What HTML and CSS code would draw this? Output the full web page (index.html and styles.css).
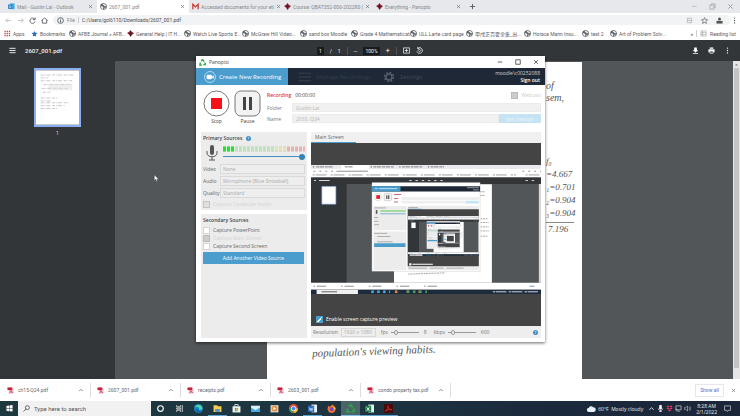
FILE: index.html
```html
<!DOCTYPE html>
<html lang="en">
<head>
<meta charset="utf-8">
<title>2607_001.pdf</title>
<link rel="stylesheet" href="styles.css">
</head>
<body>
<svg class="sprite" width="0" height="0" aria-hidden="true">
  <defs>
    <symbol id="globe" viewBox="0 0 16 16"><circle cx="8" cy="8" r="7.500" fill="#5a5e63"/><path d="M2 7l4 1 2 3-2 3-3-2zM7 2l5 1 2 4-3 1-2-3-3 0zM10 11l3-1-1 3-2 1z" fill="#f4f5f7"/></symbol>
    <symbol id="cross" viewBox="0 0 16 16"><path d="M8 0l3 4 5 3-4 4-4 5-3-5-5-4 5-3z" fill="#8f2639"/><path d="M8 3v10M4 8h8" stroke="#4d1522" stroke-width="2"/></symbol>
    <symbol id="close" viewBox="0 0 16 16"><path d="M3 3l10 10M13 3L3 13" stroke="currentColor" stroke-width="2" fill="none"/></symbol>
    <symbol id="star" viewBox="0 0 16 16"><path d="M8 1.500l2 4.500 5 .5-4 3.300 1.300 5L8 12.200 3.700 14.800 5 9.800 1 6.500l5-.5z" stroke="currentColor" stroke-width="1.500" fill="none"/></symbol>
    <symbol id="dots" viewBox="0 0 16 16"><circle cx="8" cy="2.500" r="1.600"/><circle cx="8" cy="8" r="1.600"/><circle cx="8" cy="13.500" r="1.600"/></symbol>
    <symbol id="pdf" viewBox="0 0 16 16"><path d="M4 2h11v13H4z" fill="#f0c9cf"/><path d="M1 1h11v6H1z" fill="#c8203c"/><path d="M7 7c0 3 4 6 7 6M12 8c-2 2-4 4-7 6" stroke="#c8203c" stroke-width="1.500" fill="none"/></symbol>
    <symbol id="caret" viewBox="0 0 16 16"><path d="M3 11l5-5 5 5" stroke="currentColor" stroke-width="2" fill="none"/></symbol>
    <symbol id="recycle" viewBox="0 0 16 16"><path d="M5 5l3-4 4 5M13 8l2 4-5 2M7 14H2l1-6" stroke="#28a745" stroke-width="3.200" fill="none"/></symbol>
    <symbol id="help" viewBox="0 0 16 16"><circle cx="8" cy="8" r="8" fill="#3f8fc0"/><path d="M6 6c0-3 4.500-2.500 4 0-.3 1.300-2 1.500-2 3.200M8 11v2" stroke="#fff" stroke-width="1.600" fill="none"/></symbol>

    <g id="base">
      <path fill="#e8eaed" d="M0 0h740v14H0z"/><path fill="#fff" d="M97 0h90v14H97zM0 13h740v27H0z"/>
      <path stroke="#777" stroke-width="3" stroke-dasharray="9 2 14 3" d="M17 6h52M109 6h27M201 6h67M293 6h67M385 6h43"/>
      <path stroke="#777" stroke-width="4" stroke-dasharray="4 4" d="M6 6h5M192 6h5M284 6h5M376 6h5"/>
      <path stroke="#888" stroke-width="3" stroke-dasharray="6 13" d="M8 20h68M680 20h60"/><path stroke="#888" stroke-width="3" d="M82 20h101"/>
      <path stroke="#999" stroke-width="3" stroke-dasharray="7 3 35 13" d="M5 32h655M690 32h45"/>
      <path fill="#323639" d="M0 40h740v21H0zM0 61h115v318H0z"/><path fill="#525659" d="M115 61h618v318H115z"/><path fill="#d5d5d5" d="M733 61h7v318h-7z"/>
      <path stroke="#eee" stroke-width="3" d="M26 50h34M10 50h6"/><path stroke="#ddd" stroke-width="3" stroke-dasharray="8 12" d="M316 50h110M690 50h40"/>
      <path fill="#fff" stroke="#8aaef0" stroke-width="2" d="M35 69h45v57H35z"/>
      <path fill="#fff" d="M267 62h315v317H267z"/><path fill="none" stroke="#777" stroke-width="2" stroke-dasharray="5 2 8 2" d="M544 86h14M544 98h14M546 173h24M546 185h26M546 199h26M546 212h27M546 229h22M312 351l120 -4"/>
      <path fill="#fff" d="M0 379h740v22H0z"/><path stroke="#888" stroke-width="3" stroke-dasharray="5 6 30 48" d="M8 390h440"/><path stroke="#6888d8" stroke-width="3" d="M703 390h16"/>
      <path fill="#1c2c3d" d="M0 401h740v15H0z"/><path fill="#f0f0f0" d="M18 401h133v15H18z"/><path stroke="#555" stroke-width="3" d="M34 408h50"/>
      <path stroke="#49aee0" stroke-width="8" stroke-dasharray="8 11" d="M194 408h60"/><path stroke="#e88b43" stroke-width="8" stroke-dasharray="8 30" d="M270 408h80"/><path stroke="#48a35d" stroke-width="8" stroke-dasharray="8 12" d="M308 408h65"/>
      <path stroke="#dde" stroke-width="3" stroke-dasharray="8 2 34 7" d="M585 408h145"/>
      <path fill="#fff" stroke="#aaa" d="M196 56h348v286H196z"/><path fill="#1d2735" d="M196 68h348v17H196z"/><path fill="#4a9ccb" d="M196 68h92v17h-92z"/>
      <path stroke="#c6e2f2" stroke-width="3" d="M206 76h9M219 76h58"/><path stroke="#ddd" stroke-width="2" d="M502 73h38M521 80h19"/>
      <circle cx="216" cy="103" r="12" fill="#fff" stroke="#999"/><path fill="#e21b2c" d="M210 97h12v12h-12z"/><rect x="235" y="91" width="24" height="24" rx="5" fill="#f1f1f1" stroke="#888"/><path fill="#555" d="M242 97h4v12h-4zM248 97h4v12h-4z"/>
      <path stroke="#c65c6b" stroke-width="3" d="M267 95h23M267 108h14M267 119h13"/><path fill="#efefef" d="M291 103h249v10H291zM291 115h207v9H291z"/><path fill="#c8e4f2" d="M498 115h42v9h-42z"/>
      <path fill="#ececec" d="M201 132h106v78H201zM201 214h106v124H201zM311 131h229v11H311zM311 326h229v12H311z"/>
      <path fill="#9ddb9b" d="M223 145h82v6h-82z"/><path stroke="#3f8fc0" stroke-width="2" d="M223 157h82"/><path stroke="#555" stroke-width="5" d="M211 145v12"/>
      <path stroke="#888" stroke-width="2" d="M203 138h38M203 169h13M203 181h14M203 192h16M203 220h42M213 230h43M213 247h50M313 137h31M313 332h60M382 332h45M435 332h56"/>
      <path fill="#4a9ccb" d="M203 252h101v12H203zM311 141h45v2h-45z"/><path fill="#444" d="M311 142h229v184H311z"/><path fill="#fff" d="M316 316h7v7h-7zM326 318h66v3h-66z"/>
    </g>
    <g id="level3"><use href="#base"/><use href="#base" transform="translate(312 164) scale(.308)"/></g>
    <g id="level2"><use href="#base"/><use href="#level3" transform="translate(312 164) scale(.308)"/></g>
  </defs>
</svg>

<header class="browser">
  <nav class="tabs" aria-label="Tabs">
    <div class="tab"><svg class="ico" viewBox="0 0 16 16"><path d="M4 1h11v13H4z" fill="#35a8e8"/><path d="M0 4h9v9H0z" fill="#1267b4"/><circle cx="4.500" cy="8.500" r="2.500" fill="none" stroke="#fff" stroke-width="1.500"/></svg><span>Mail - Guolin Lai - Outlook</span><svg class="x"><use href="#close"/></svg></div>
    <div class="tab active"><svg class="ico"><use href="#globe"/></svg><span>2607_001.pdf</span><svg class="x"><use href="#close"/></svg></div>
    <div class="tab"><svg class="ico" viewBox="0 0 16 16"><path d="M2 14V3l6 6 6-6v11" stroke="#c63b35" stroke-width="3" fill="none"/></svg><span>Accessed documents for your eti</span><svg class="x"><use href="#close"/></svg></div>
    <div class="tab"><svg class="ico"><use href="#cross"/></svg><span>Course: QBAT352-006-202280 (</span><svg class="x"><use href="#close"/></svg></div>
    <div class="tab"><svg class="ico"><use href="#cross"/></svg><span>Everything - Panopto</span><svg class="x"><use href="#close"/></svg></div>
    <button class="plain newtab" aria-label="New tab"><svg class="ico" viewBox="0 0 16 16"><path d="M8 2v12M2 8h12" stroke="#555" stroke-width="2"/></svg></button>
    <div class="wincontrols"><svg viewBox="0 0 16 16"><path d="M3 8h10" stroke="#bbb" stroke-width="2"/></svg><svg viewBox="0 0 16 16"><path d="M2 5h9v9H2zM5 5V2h9v9h-3" stroke="#999" stroke-width="1.500" fill="none"/></svg><svg><use href="#close"/></svg></div>
  </nav>
  <div class="address">
    <div class="navicons">
      <svg viewBox="0 0 16 16"><path d="M14 8H2M7 3L2 8l5 5" class="faint"/></svg>
      <svg viewBox="0 0 16 16"><path d="M2 8h12M9 3l5 5-5 5" class="faint"/></svg>
      <svg viewBox="0 0 16 16"><path d="M13 5a6 6 0 1 0 1 5M14 1v5H9" class="line"/></svg>
      <svg viewBox="0 0 16 16"><path d="M1 8l7-6 7 6M3 7v7h10V7" class="line"/></svg>
    </div>
    <label class="omnibox"><svg class="ico" viewBox="0 0 16 16"><circle cx="8" cy="8" r="6.500" class="line"/><path d="M8 4v2M8 7v5" class="line"/></svg><span>File</span><input aria-label="Address" value="C:/Users/gol6110/Downloads/2607_001.pdf"></label>
    <div class="acticons">
      <svg viewBox="0 0 16 16"><path d="M3 3h10v10H3zM3 8h10" class="faint"/></svg>
      <svg><use href="#star"/></svg>
      <svg viewBox="0 0 16 16"><circle cx="8" cy="4.500" r="3.500"/><path d="M1 15V9h14v6z"/></svg>
      <svg><use href="#dots"/></svg>
    </div>
  </div>
  <nav class="bookmarks" aria-label="Bookmarks">
    <a href="#"><svg class="ico" viewBox="0 0 16 16"><path d="M1 3h14M1 8h14M1 13h14" stroke="#c44" stroke-width="3" stroke-dasharray="3 2"/></svg><span>Apps</span></a>
    <a href="#"><svg class="ico" viewBox="0 0 16 16"><path d="M8 2l2 4 5 1-4 3 1 5-4-2-4 2 1-5-4-3 5-1z" fill="#2a6ac8"/></svg><span>Bookmarks</span></a>
    <a href="#"><svg class="ico"><use href="#globe"/></svg><span>AFBE Journal « AFB...</span></a>
    <a href="#"><svg class="ico"><use href="#cross"/></svg><span>General Help | IT H...</span></a>
    <a href="#"><svg class="ico"><use href="#globe"/></svg><span>Watch Live Sports E...</span></a>
    <a href="#"><svg class="ico"><use href="#globe"/></svg><span>McGraw Hill Video...</span></a>
    <a href="#"><svg class="ico"><use href="#globe"/></svg><span>sand box Moodle</span></a>
    <a href="#"><svg class="ico"><use href="#globe"/></svg><span>Grade 4 Mathematicat...</span></a>
    <a href="#"><svg class="ico"><use href="#globe"/></svg><span>ULL Larte card page</span></a>
    <a href="#"><svg class="ico"><use href="#globe"/></svg><span>甲戌正百霍全集_出...</span></a>
    <a href="#"><svg class="ico"><use href="#globe"/></svg><span>Horace Mann Insu...</span></a>
    <a href="#"><svg class="ico"><use href="#globe"/></svg><span>test 2</span></a>
    <a href="#"><svg class="ico"><use href="#globe"/></svg><span>Art of Problem Solv...</span></a>
    <div class="reading"><b>»</b><i></i><svg class="ico" viewBox="0 0 16 16"><path d="M2 2h12v12H2zM2 6h12M2 10h12M6 2v12" stroke="#888" fill="none"/></svg><span>Reading list</span></div>
  </nav>
</header>

<main class="viewer">
  <div class="pdfbar">
    <svg class="ico" viewBox="0 0 16 16"><path d="M1 3h14M1 8h14M1 13h14" stroke="#fff" stroke-width="2"/></svg>
    <strong>2607_001.pdf</strong>
    <div class="pager"><span class="chip">1</span><span>/</span><span>1</span><i></i><span>—</span><span class="chip">100%</span><span class="plus">+</span><i></i>
      <svg class="ico" viewBox="0 0 16 16"><path d="M1 2h14v12H1zM8 4v8M4 8h8" stroke="#fff" stroke-width="1.600" fill="none"/></svg>
      <svg class="ico" viewBox="0 0 16 16"><path d="M4 3a6.500 6.500 0 1 1-2 7M4 0v4h4M8 5l3 3-3 3-3-3z" stroke="#fff" stroke-width="1.600" fill="none"/></svg></div>
    <div class="pdfacts">
      <svg class="ico" viewBox="0 0 16 16"><path d="M5 1h6v6h3l-6 6-6-6h3zM2 14h12v2H2z" fill="#fff"/></svg>
      <svg class="ico" viewBox="0 0 16 16"><path d="M4 1h8v3H4zM1 5h14v7h-3v3H4v-3H1z" fill="#fff"/><path d="M5 10h6v3H5z" fill="#323639"/></svg>
      <svg class="ico light"><use href="#dots"/></svg></div>
  </div>
  <aside class="thumbs">
    <svg viewBox="0 0 45 57" class="thumb"><path fill="#fff" d="M0 0h45v57H0z"/><path d="M5 5h34M5 8h8M5 11h33M8 15h30M6 19h28M7 23h8M5 29h17M5 32h12M5 34h30M5 37h25M5 40h17" stroke="#aaa" stroke-dasharray="3 1 1 1 4 2" stroke-width=".7" fill="none"/><path d="M13 14h25v7H13z" fill="#ddd" opacity=".5"/></svg>
    <span>1</span>
  </aside>
  <section class="canvas">
    <article class="page">
      <div class="ink top">of<br>sem,</div>
      <div class="ink sums"><span>f₀</span><span>=4.667</span><span>₁=0.701</span><span>₂=0.904</span><span>₃=0.904</span><span class="total">7.196</span></div>
      <div class="ink foot">population's viewing habits.</div>
    </article>
  </section>
  <div class="scroll"><svg viewBox="0 0 16 16"><path d="M4 10l4-4 4 4z" fill="#888"/></svg><i></i></div>
</main>

<footer class="downloads">
  <div class="file"><svg class="ico"><use href="#pdf"/></svg><span>ch15-Q24.pdf</span><svg class="caret"><use href="#caret"/></svg></div>
  <div class="file"><svg class="ico"><use href="#pdf"/></svg><span>2607_001.pdf</span><svg class="caret"><use href="#caret"/></svg></div>
  <div class="file"><svg class="ico"><use href="#pdf"/></svg><span>receipts.pdf</span><svg class="caret"><use href="#caret"/></svg></div>
  <div class="file"><svg class="ico"><use href="#pdf"/></svg><span>2603_001.pdf</span><svg class="caret"><use href="#caret"/></svg></div>
  <div class="file"><svg class="ico"><use href="#pdf"/></svg><span>condo property tax.pdf</span><svg class="caret"><use href="#caret"/></svg></div>
  <button class="showall">Show all</button><svg class="x"><use href="#close"/></svg>
</footer>

<footer class="taskbar">
  <button class="plain start" aria-label="Start"><svg viewBox="0 0 16 16"><path d="M1 2l6-1v6H1zM8 1l7-1v7H8zM1 8h6v6l-6-1zM8 8h7v7l-7-1z" fill="#fff"/></svg></button>
  <label class="search"><svg viewBox="0 0 16 16"><circle cx="10" cy="6" r="4.500" class="line"/><path d="M7 9l-6 6" class="line"/></svg><input aria-label="Search" placeholder="Type here to search"></label>
  <div class="apps">
    <span><svg viewBox="0 0 16 16"><circle cx="8" cy="8" r="5" fill="none" stroke="#fff" stroke-width="2"/></svg></span>
    <span><svg viewBox="0 0 16 16"><path d="M3 2v3h7V2M3 14v-3h7v3M3 7h7v2H3zM13 2v12" stroke="#ddd" stroke-width="1.500" fill="none"/></svg></span>
    <span><svg viewBox="0 0 16 16"><circle cx="8" cy="8" r="8" fill="#1683c7"/><path d="M1 6c2-6 11-7 14 1 0 3-4 4-6 3 1-5-5-6-8-4z" fill="#54d4a0"/><path d="M6 8c-1 4 3 6 7 5-4 4-10 1-9-3z" fill="#0b4f91"/></svg></span>
    <span class="open"><svg viewBox="0 0 16 16"><path d="M1 2h6l2 2h6v10H1z" fill="#f7cd4d"/><path d="M4 9h8v5H4z" fill="#4a91c8"/></svg></span>
    <span><svg viewBox="0 0 16 16"><path d="M1 4h14v11H1z" fill="#eef6f8"/><path d="M5 4V1h6v3" stroke="#eee" fill="none" stroke-width="1.500"/><path d="M5 7h3v3H5z" fill="#e6593a"/><path d="M8 7h3v3H8z" fill="#7dbb42"/><path d="M5 10h3v3H5z" fill="#35a2dc"/><path d="M8 10h3v3H8z" fill="#f2b632"/></svg></span>
    <span><svg viewBox="0 0 16 16"><path d="M0 3h16v11H0z" fill="#dceffa"/><path d="M0 6l8 5 8-5v8H0z" fill="#45a9e2"/></svg></span>
    <span><svg viewBox="0 0 16 16"><path d="M1 2h14v13H1z" fill="#d8d0c3"/><circle cx="8" cy="8" r="5" fill="#e48935"/><path d="M6 5l5 3-5 3z" fill="#fff"/></svg></span>
    <span><svg viewBox="0 0 16 16"><circle cx="8" cy="8" r="8" fill="#e2453a"/><path d="M1 4l7 12A8 8 0 0 1 1 4z" fill="#35a853"/><path d="M8 16l4-8h4a8 8 0 0 1-8 8z" fill="#fbc02d"/><circle cx="8" cy="8" r="4" fill="#4285f4" stroke="#fff" stroke-width="1.500"/></svg></span>
    <span class="open"><svg viewBox="0 0 16 16"><path d="M6 1h10v14H6z" fill="#e6eef9"/><path d="M0 3h11v11H0z" fill="#2b66b8"/><path d="M2 6l2 6 1.500-5L7 12l2-6M12 6h3M12 10h3" stroke="#fff" fill="none"/></svg></span>
    <span><svg viewBox="0 0 16 16"><path d="M2 3l3 2 5-4 5 6c2 11-13 12-14 2z" fill="#f4722d"/><path d="M5 7c3-3 8 1 6 5-3 2-7-1-6-5z" fill="#7545c6"/><path d="M11 2l4 5-1 5z" fill="#ffcb38"/></svg></span>
    <span class="current"><svg><use href="#recycle"/></svg></span>
    <span class="open"><svg viewBox="0 0 16 16"><path d="M6 1h10v14H6z" fill="#e1f2e8"/><path d="M0 3h11v11H0z" fill="#1c7d48"/><path d="M3 6l5 6M8 6l-5 6M12 6h3M12 10h3" stroke="#fff" stroke-width="1.500"/></svg></span>
    <span class="open"><svg viewBox="0 0 16 16"><path d="M0 0h16v16H0z" fill="#480909"/><path d="M2 13c5-3 6-7 5-10-1 5 3 7 7 7-5-1-9 1-12 3z" stroke="#f04438" fill="none"/></svg></span>
  </div>
  <div class="tray">
    <svg class="cloud" viewBox="0 0 16 16"><path d="M3 14a3 3 0 0 1 0-7 4.500 4.500 0 0 1 8-1 4 4 0 0 1 1 8z" fill="#e7f1fa"/></svg><span class="weather">60°F&ensp;Mostly cloudy</span>
    <svg><use href="#caret"/></svg>
    <svg viewBox="0 0 16 16"><rect x="5" y="0" width="6" height="10" rx="2" fill="#fff"/><path d="M3 8c0 6 10 6 10 0M8 12v4M5 15h6" stroke="#fff" fill="none" stroke-width="1.500"/></svg>
    <svg viewBox="0 0 16 16"><path d="M1 3l3.500-2L8 3 4.500 5.500zM8 3l3.500-2L15 3l-3.500 2.500zM1 8l3.500-2.500L8 8l-3.500 2.500zM8 8l3.500-2.500L15 8l-3.500 2.500zM4.500 12L8 9.500l3.500 2.500L8 15z" fill="#f0386b"/></svg>
    <svg viewBox="0 0 16 16"><path d="M2 2h12v9H2zM5 14h6M3 8v6" stroke="#ddd" fill="none" stroke-width="1.500"/></svg>
    <svg viewBox="0 0 16 16"><path d="M1 6h3l4-4v12l-4-4H1zM11 5c2 2 2 4 0 6M13 3c3 3 3 7 0 10" stroke="#bbb" fill="none" stroke-width="1.500"/></svg>
    <time>8:28 AM<br>2/1/2022</time>
    <svg class="notify" viewBox="0 0 16 16"><path d="M1 2h14v10h-5l-2 3-2-3H1z" stroke="#ddd" fill="none" stroke-width="1.500"/></svg>
  </div>
</footer>

<section class="recorder" aria-label="Panopto">
  <div class="title"><svg class="ico"><use href="#recycle"/></svg><span>Panopto</span><div><svg viewBox="0 0 16 16"><path d="M2 8h12" stroke="#333" stroke-width="2"/></svg><svg viewBox="0 0 16 16"><path d="M2 2h12v12H2z" stroke="#333" stroke-width="2" fill="none"/></svg><svg><use href="#close"/></svg></div></div>
  <nav class="menu">
    <button class="create"><svg viewBox="0 0 16 16"><circle cx="8" cy="8" r="7.300" stroke="#d8edf8" fill="none"/><rect x="3.500" y="5" width="7" height="6" rx="1.500" fill="#fff"/><path d="M10 8l3-2.500v5z" fill="#fff"/></svg>Create New Recording</button>
    <button class="manage"><svg viewBox="0 0 16 16"><path d="M0 3h16M0 8h16M0 13h16" stroke="#39424f" stroke-width="1.500"/></svg>Manage Recordings</button>
    <button class="settings"><svg viewBox="0 0 16 16"><circle cx="8" cy="8" r="4" stroke="#56606d" stroke-width="2" fill="none"/><circle cx="8" cy="8" r="6" stroke="#56606d" stroke-width="2" stroke-dasharray="2.400 2.300" fill="none"/></svg>Settings</button>
    <div class="account"><span>moodle\c00252088</span><a href="#">Sign out</a></div>
  </nav>
  <div class="session">
    <button class="big"><svg viewBox="0 0 27 27"><circle cx="13.500" cy="13.500" r="12.500" fill="#fff" stroke="#777"/><path d="M8 8h11v11H8z" fill="#fa1019"/></svg>Stop</button>
    <button class="big"><svg viewBox="0 0 27 27"><rect x="1" y="1" width="25" height="25" rx="6" fill="#f2f2f2" stroke="#777"/><path d="M9 7h3v13H9zM15 7h3v13h-3z" fill="#444"/></svg>Pause</button>
    <div class="fields">
      <div class="status"><strong>Recording</strong><span>00:00:00</span><label><input type="checkbox" disabled>Webcast</label></div>
      <label class="row"><span>Folder</span><select disabled><option>Guolin Lai</option></select></label>
      <div class="row"><label for="name">Name</label><input id="name" value="2033, Q24" disabled><button disabled>Join Session</button></div>
    </div>
  </div>
  <div class="work">
    <div class="sources">
      <section class="panel primary">
        <h2>Primary Sources <svg><use href="#help"/></svg></h2>
        <div class="audio">
          <svg class="mic" viewBox="0 0 12 16"><rect x="4" y="0" width="4" height="10" rx="2" fill="#555"/><path d="M1 6v2c0 5 10 5 10 0V6M6 12v3M3 15h6" stroke="#555" stroke-width="1" fill="none"/></svg>
          <div><svg class="meter" viewBox="0 0 82 6" preserveAspectRatio="none"><path d="M0 3h82" stroke="#e6b3b0" stroke-width="5" stroke-dasharray="3 1"/><path d="M0 3h64" stroke="#e3e2b5" stroke-width="5" stroke-dasharray="3 1"/><path d="M0 3h52" stroke="#bfe3be" stroke-width="5" stroke-dasharray="3 1"/><path d="M0 3h12" stroke="#1fe62a" stroke-width="5" stroke-dasharray="3 1"/></svg>
          <input class="range volume" type="range" value="100" aria-label="Volume"></div>
        </div>
        <label class="row"><span>Video</span><select disabled><option>None</option></select></label>
        <label class="row"><span>Audio</span><select disabled><option>Microphone (Blue Snowball)</option></select></label>
        <label class="row"><span>Quality</span><select disabled><option>Standard</option></select></label>
        <label class="check off"><input type="checkbox" disabled>Capture Computer Audio</label>
      </section>
      <section class="panel secondary">
        <h2>Secondary Sources</h2>
        <label class="check"><input type="checkbox">Capture PowerPoint</label>
        <label class="check off"><input type="checkbox" disabled>Capture Main Screen</label>
        <label class="check"><input type="checkbox">Capture Second Screen</label>
        <button class="add">Add Another Video Source</button>
      </section>
    </div>
    <section class="preview">
      <div class="ptabs"><span>Main Screen</span></div>
      <div class="stage">
        <svg viewBox="0 0 740 416" role="img" aria-label="Screen capture preview"><use href="#level2"/></svg>
        <label class="check enable"><input type="checkbox" checked>Enable screen capture preview</label>
      </div>
      <div class="pfoot">
        <label>Resolution <select disabled><option>1920 x 1080</option></select></label>
        <label class="slide">fps <input class="range" type="range" value="15"></label><span>8</span>
        <label class="slide kb">kbps <input class="range" type="range" value="15"></label><span>600</span>
        <svg><use href="#help"/></svg>
      </div>
    </section>
  </div>
</section>
<svg class="pointer" viewBox="0 0 8 12"><path d="M1 1v8l2-2 1 3 1.500-.5L4.500 7H7z" fill="#fff" stroke="#333" stroke-width=".6"/></svg>
</body>
</html>
```
FILE: styles.css
```css
* { box-sizing: border-box; }
body { margin: 0; min-height: 100vh; display: flex; flex-direction: column; position: relative; overflow: hidden; font: 5px/6px Roboto, "Noto Sans CJK SC", sans-serif; color: #5c6065; background: #fff; }
button, input, select { font: inherit; color: inherit; border: 0; padding: 0; margin: 0; background: none; border-radius: 0; appearance: none; min-width: 0; outline: 0; }
a { color: inherit; text-decoration: none; }
svg { display: block; flex: none; width: 7px; height: 7px; }
.sprite { position: absolute; width: 0; height: 0; }
.line { stroke: #55595e; stroke-width: 2; fill: none; }
.faint { stroke: #a5a8ac; stroke-width: 1.5; fill: none; }
.plain { display: grid; place-items: center; }

.tabs { display: flex; height: 13px; background: #e6e8ec; align-items: center; padding-left: 5px; }
.tab { flex: none; width: 92px; height: 13px; display: flex; align-items: center; gap: 2px; padding: 0 4px 0 3px; color: #85888d; }
.tab span { flex: 1; white-space: nowrap; }
.tab.active { background: #fff; }
.x { width: 5px; height: 5px; color: #666; }
.newtab { padding-left: 4px; }
.wincontrols { margin-left: auto; display: flex; gap: 11px; padding-right: 6px; color: #999; }
.address { display: flex; height: 14px; align-items: center; gap: 5px; padding: 0 8px 0 5px; }
.navicons { display: flex; gap: 5px; }
.omnibox { flex: 1; display: flex; align-items: center; gap: 3px; height: 10px; border-radius: 5px; background: #f1f3f4; padding: 0 4px; color: #888; }
.omnibox input { flex: 1; color: #4b4e52; border-left: 1px solid #ccc; padding-left: 3px; line-height: 6px; height: 6px; }
.acticons { display: flex; gap: 8px; margin-left: -50px; margin-right: -6px; fill: #555; color: #555; }
.bookmarks { display: grid; grid-template-columns: 27px 38px 58px 57px 58px 58px 51px 59px 56px 58px 58px 28px 52px 1fr; padding: 0 4px; height: 13px; align-items: center; }
.bookmarks a { display: flex; gap: 2px; align-items: center; min-width: 0; }
.bookmarks span { white-space: nowrap; }
.reading { display: flex; justify-content: flex-end; align-items: center; gap: 3px; }
.reading i { width: 1px; height: 7px; background: #ccc; }

.viewer { flex: 1; display: grid; grid-template: 21px 1fr / 115px 1fr 7px; background: #525659; min-height: 0; }
.pdfbar { grid-column: 1 / -1; background: #323639; color: #f2f2f2; display: grid; grid-template-columns: 16px 1fr auto 1fr; align-items: center; padding: 0 9px; }
.pdfbar strong { font-weight: 500; font-size: 6px; }
.pager { display: flex; align-items: center; gap: 6px; padding-right: 16px; }
.pager i { width: 1px; height: 8px; background: #555; }
.pager .chip { background: #191b1c; padding: 1px 2px; }
.plus { font-size: 8px; }
.pdfacts { display: flex; justify-content: flex-end; gap: 9px; }
.light { fill: #fff; }
.thumbs { background: #323639; color: #ddd; display: flex; flex-direction: column; align-items: center; gap: 3px; padding-top: 7px; }
.thumb { width: 47px; height: 59px; border: 2px solid #8aaef0; }
.canvas { padding: 1px 151px 0 152px; display: flex; }
.page { flex: 1; background: #fff; display: flex; flex-direction: column; font: italic 10px/12px "Liberation Serif", serif; color: #555; }
.ink.top { align-self: flex-end; width: 36px; padding-top: 18px; }
.sums { align-self: flex-end; width: 36px; padding-top: 51px; display: flex; flex-direction: column; font-size: 9px; line-height: 13px; white-space: nowrap; }
.sums .total { border-top: 1px solid #888; margin: 2px 8px 0 0; padding-left: 2px; }
.foot { margin: auto 0 20px 45px; font-size: 11px; transform: rotate(-2deg); transform-origin: left; }
.scroll { background: #e6e6e6; display: flex; flex-direction: column; }
.scroll i { height: 300px; background: #c4c4c4; margin: 0 1px; }

.downloads { height: 22px; background: #fff; display: flex; align-items: center; padding: 0 4px 0 1px; }
.file { display: flex; align-items: center; gap: 4px; width: 90px; height: 14px; padding: 0 6px; border-right: 1px solid #ddd; color: #66696d; }
.file span { flex: 1; white-space: nowrap; }
.caret { width: 6px; height: 6px; }
.showall { margin: 0 7px 0 auto; width: 29px; height: 13px; border: 1px solid #e5e7ea; color: #4a6fd0; }

.taskbar { height: 15px; display: flex; align-items: center; background: linear-gradient(90deg, #1d393f, #1d3440 50%, #1b293d 75%, #1b2638); color: #e9edf1; }
.start { width: 18px; }
.search { width: 133px; height: 15px; background: #f1f1f1; display: flex; align-items: center; gap: 4px; padding-left: 5px; }
.search input { flex: 1; font-size: 6px; color: #555; }
.search input::placeholder { color: #555; opacity: 1; }
.apps { display: flex; height: 15px; }
.apps span { width: 19px; display: grid; place-items: center; }
.apps svg { width: 9px; height: 9px; }
.apps .open { box-shadow: inset 0 -1px #5da2cc; }
.apps .current { background: #4a6468; box-shadow: inset 0 -1px #7fc0e8; }
.tray { margin-left: auto; display: flex; align-items: center; gap: 2px; padding-right: 9px; font-family: "Open Sans", sans-serif; }
.tray .cloud { width: 9px; height: 9px; }
.weather { margin-right: 3px; white-space: nowrap; }
.tray time { text-align: center; margin: 0 5px 0 3px; }

.recorder { position: absolute; left: 196px; top: 56px; width: 349px; background: #fff; color: #444; box-shadow: 0 1px 3px #0009; padding-bottom: 4px; font-family: "Open Sans", sans-serif; }
.title { height: 12px; display: flex; align-items: center; gap: 3px; padding: 0 6px 0 3px; }
.title div { margin-left: auto; display: flex; gap: 12px; color: #333; }
.title div svg { width: 6px; height: 6px; }
.menu { display: flex; height: 17px; background: #1e2836; }
.menu button { display: flex; align-items: center; }
.menu svg { width: 12px; height: 12px; }
.create { width: 92px; background: #4b9dce; color: #fff; font-size: 6px; gap: 3px; padding-left: 8px; }
.manage { gap: 5px; padding-left: 11px; color: #353f4c; font-size: 6px; width: 90px; }
.settings { gap: 5px; padding-left: 5px; color: #424c58; font-size: 6px; }
.account { margin-left: auto; display: flex; flex-direction: column; justify-content: center; align-items: flex-end; padding-right: 5px; color: #cdd3da; line-height: 7px; }
.account a { color: #fff; font-weight: 600; }
.session { display: flex; gap: 4px; padding: 5px 4px 0 7px; height: 47px; }
.big { display: flex; flex-direction: column; align-items: center; gap: 1px; align-self: flex-start; }
.big svg { width: 27px; height: 27px; }
.fields { flex: 1; padding-left: 2px; display: grid; grid-template-rows: 12px 11px 11px; }
.status { display: flex; gap: 4px; align-items: center; padding-bottom: 2px; }
.status strong { color: #dc3150; font-weight: 600; }
.status label { margin-left: auto; display: flex; align-items: center; gap: 3px; color: #ccc; }
.row { display: flex; align-items: center; color: #777; }
.fields .row > :first-child { width: 25px; }
.fields select, .fields .row input { flex: 1; height: 9px; background: #f1f1f1; padding-left: 3px; color: #b5b5b5; border: 1px solid #ececec; opacity: 1; }
.fields .row button { width: 42px; height: 9px; background: #c5e3f2; color: #edf7fc; }
input[type="checkbox"] { width: 7px; height: 7px; background: #fff; border: 1px solid #d5d5d5; }
input[type="checkbox"]:disabled { background: #ccc; border-color: #bbb; }
.work { display: grid; grid-template-columns: 106px 1fr; gap: 4px; padding: 0 4px 0 5px; }
.sources { display: flex; flex-direction: column; gap: 4px; }
.panel { background: #ececec; padding: 3px 2px; }
.primary { height: 78px; }
.secondary { flex: 1; }
h2 { margin: 0; font: 600 5px/7px "Open Sans", sans-serif; display: flex; gap: 4px; align-items: center; }
h2 svg { width: 5px; height: 5px; }
.audio { display: grid; grid-template-columns: 20px 1fr; height: 21px; align-items: center; }
.mic { width: 12px; height: 16px; margin-left: 3px; }
.meter { width: 100%; height: 6px; margin-bottom: 2px; }
.range { display: block; width: 100%; height: 6px; background: linear-gradient(#999, #999) center / 100% 1px no-repeat; }
.range::-webkit-slider-thumb { appearance: none; width: 4px; height: 5px; border-radius: 2px; border: 1px solid #999; background: #eee; }
.volume { background: linear-gradient(#3f8fc0, #3f8fc0) center / 100% 1px no-repeat; }
.volume::-webkit-slider-thumb { width: 6px; height: 6px; border: 0; border-radius: 3px; background: #3682b5; }
.panel .row { height: 12px; }
.panel .row span { width: 17px; color: #666; }
.panel select { flex: 1; height: 10px; border: 1px solid #d9d9d9; padding-left: 2px; color: #aaa; opacity: 1; background: #eee; }
.check { display: flex; gap: 3px; align-items: center; height: 8px; color: #666; }
.primary .check { height: 10px; }
.off { color: #d3d3d3; }
.primary .off input { background: #e0e0e0; border-color: #c5c5c5; }
.secondary h2 { margin-bottom: 2px; }
.add { width: 101px; height: 12px; margin-top: 2px; background: #4b9dce; color: #fff; display: block; }
.ptabs { height: 11px; background: #f0f0f0; }
.ptabs span { display: block; width: 45px; height: 11px; line-height: 10px; padding-left: 4px; border-bottom: 1px solid #4b9dce; color: #666; }
.stage { background: #444; height: 183px; padding: 22px 0 3px; display: flex; flex-direction: column; justify-content: space-between; }
.stage > svg { width: 100%; height: auto; }
.enable { color: #fff; padding-left: 5px; }
.enable input:checked { border-color: #4b9dce; background: linear-gradient(135deg, #4b9dce 45%, #fff 45%, #fff 60%, #4b9dce 60%); }
.pfoot { height: 12px; background: #eee; display: flex; align-items: center; padding: 0 3px 0 2px; gap: 5px; color: #777; }
.pfoot label { display: flex; align-items: center; gap: 3px; }
.pfoot select { width: 35px; height: 9px; border: 1px solid #d8d8d8; padding-left: 2px; color: #aaa; opacity: 1; }
.slide input { width: 28px; }
.kb { margin-left: 2px; }
.pfoot svg { width: 5px; height: 5px; margin-left: auto; }
.pointer { position: absolute; left: 153px; top: 174px; width: 7px; height: 9px; }
```
